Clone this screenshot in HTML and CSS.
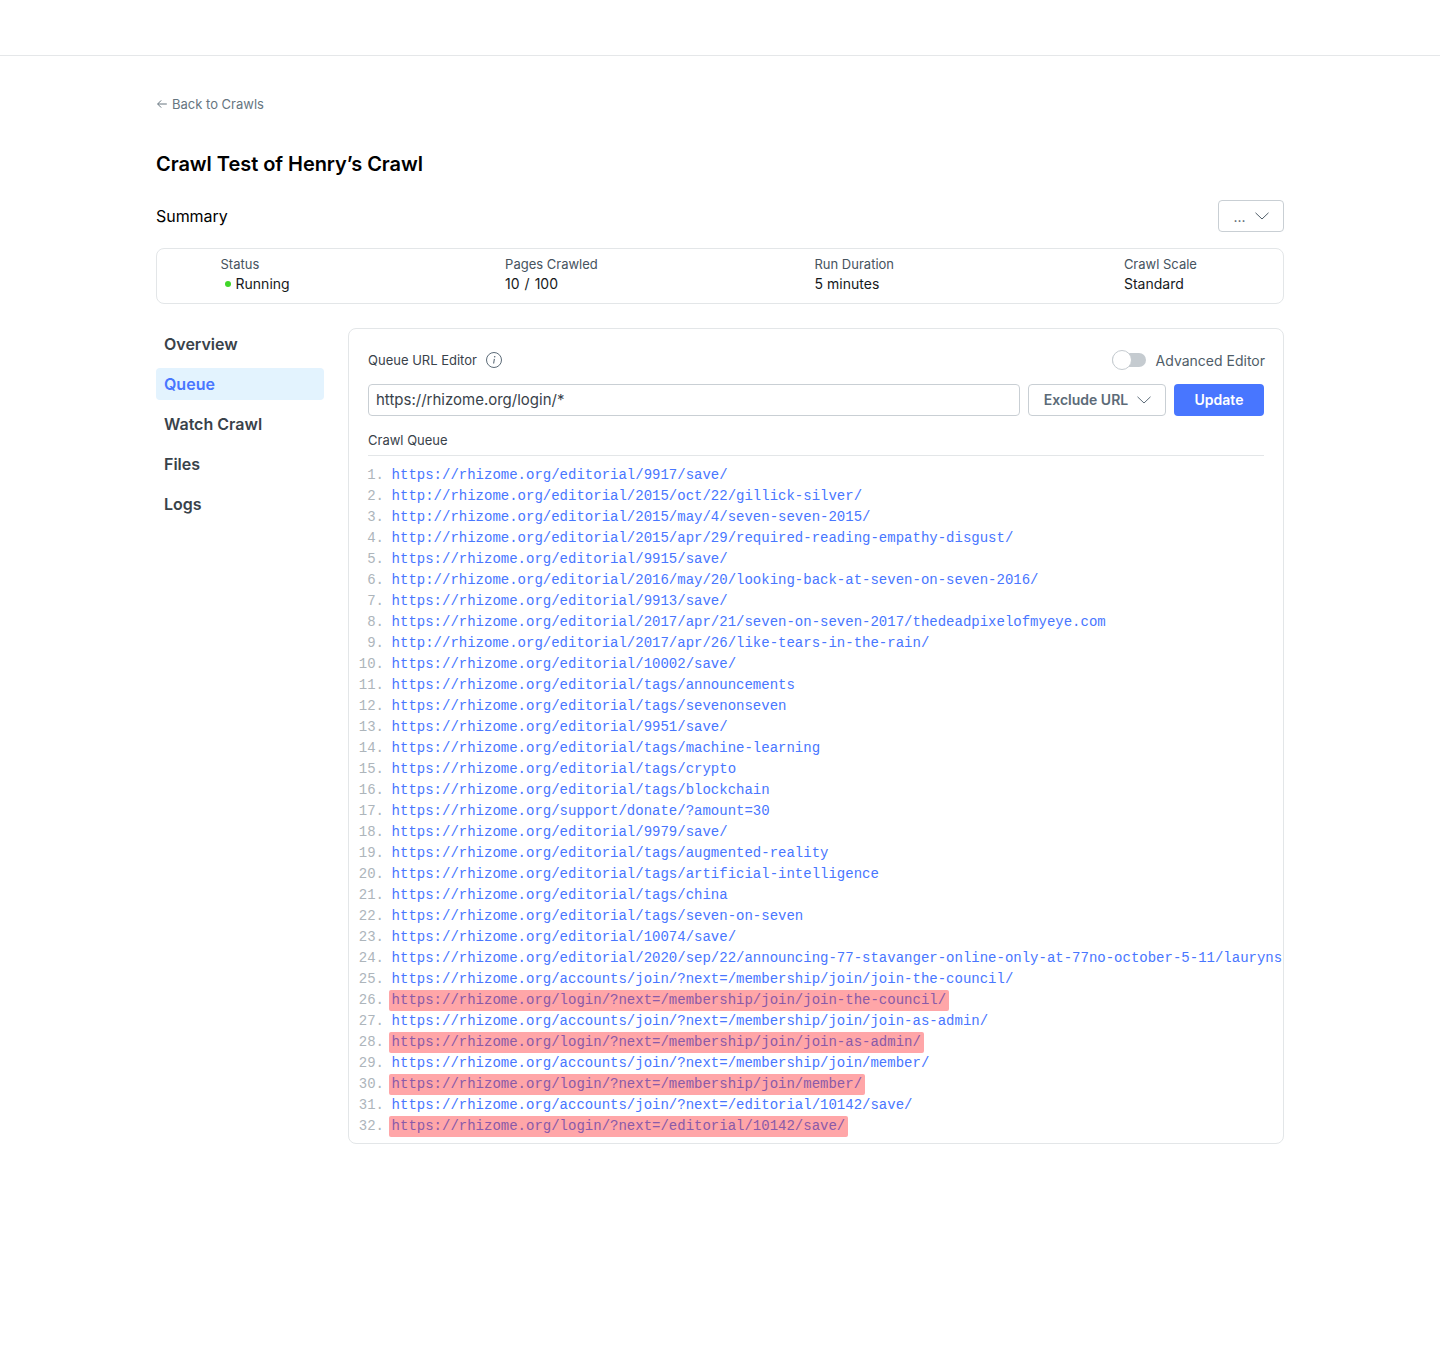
FILE: index.html
```html
<!DOCTYPE html>
<html lang="en">
<head>
<meta charset="utf-8">
<title>Crawl Test of Henry's Crawl</title>
<link rel="stylesheet" href="styles.css">
</head>
<body>
<header class="topbar"></header>
<main class="page">
  <a class="back" href="#"><svg class="back-icon" width="12" height="12" viewBox="0 0 12 12" fill="none"><path d="M10.8 6H1.8M5.2 2.4 1.6 6l3.6 3.6" stroke="currentColor" stroke-width="1"/></svg>Back to Crawls</a>
  <h1 class="title">Crawl Test of Henry’s Crawl</h1>
  <div class="summary-head">
    <h2 class="summary-title">Summary</h2>
    <button class="btn-more"><span>...</span><svg class="chev" width="14" height="8" viewBox="0 0 14 8" fill="none"><path d="M.5.8 7 7l6.5-6.2" stroke="currentColor" stroke-width="1"/></svg></button>
  </div>
  <dl class="summary">
    <div class="stat stat-status"><dt>Status</dt><dd><i class="dot"></i>Running</dd></div>
    <div class="stat stat-pages"><dt>Pages Crawled</dt><dd>10 / 100</dd></div>
    <div class="stat stat-duration"><dt>Run Duration</dt><dd>5 minutes</dd></div>
    <div class="stat stat-scale"><dt>Crawl Scale</dt><dd>Standard</dd></div>
  </dl>
  <div class="content">
    <nav class="nav">
      <a href="#">Overview</a>
      <a href="#" class="active">Queue</a>
      <a href="#">Watch Crawl</a>
      <a href="#">Files</a>
      <a href="#">Logs</a>
    </nav>
    <section class="panel">
      <div class="editor-head">
        <div class="editor-label">Queue URL Editor
          <svg class="info" width="16" height="16" viewBox="0 0 16 16" fill="none"><circle cx="8" cy="8" r="7.5" stroke="#5c6b78"/><path d="M8.4 6.8 7.6 11.5" stroke="#5c6b78" stroke-width="1.1"/><circle cx="8.7" cy="4.7" r=".8" fill="#5c6b78"/></svg>
        </div>
        <label class="toggle-wrap"><span class="toggle"><span class="knob"></span></span>Advanced Editor</label>
      </div>
      <div class="editor-row">
        <input class="url-input" type="text" value="https://rhizome.org/login/*">
        <button class="btn-select">Exclude URL<svg class="chev" width="14" height="8" viewBox="0 0 14 8" fill="none"><path d="M.5.8 7 7l6.5-6.2" stroke="currentColor" stroke-width="1"/></svg></button>
        <button class="btn-primary">Update</button>
      </div>
      <h3 class="queue-title">Crawl Queue</h3>
      <ol class="queue">
        <li><a href="#">https://rhizome.org/editorial/9917/save/</a></li>
        <li><a href="#">http://rhizome.org/editorial/2015/oct/22/gillick-silver/</a></li>
        <li><a href="#">http://rhizome.org/editorial/2015/may/4/seven-seven-2015/</a></li>
        <li><a href="#">http://rhizome.org/editorial/2015/apr/29/required-reading-empathy-disgust/</a></li>
        <li><a href="#">https://rhizome.org/editorial/9915/save/</a></li>
        <li><a href="#">http://rhizome.org/editorial/2016/may/20/looking-back-at-seven-on-seven-2016/</a></li>
        <li><a href="#">https://rhizome.org/editorial/9913/save/</a></li>
        <li><a href="#">https://rhizome.org/editorial/2017/apr/21/seven-on-seven-2017/thedeadpixelofmyeye.com</a></li>
        <li><a href="#">http://rhizome.org/editorial/2017/apr/26/like-tears-in-the-rain/</a></li>
        <li><a href="#">https://rhizome.org/editorial/10002/save/</a></li>
        <li><a href="#">https://rhizome.org/editorial/tags/announcements</a></li>
        <li><a href="#">https://rhizome.org/editorial/tags/sevenonseven</a></li>
        <li><a href="#">https://rhizome.org/editorial/9951/save/</a></li>
        <li><a href="#">https://rhizome.org/editorial/tags/machine-learning</a></li>
        <li><a href="#">https://rhizome.org/editorial/tags/crypto</a></li>
        <li><a href="#">https://rhizome.org/editorial/tags/blockchain</a></li>
        <li><a href="#">https://rhizome.org/support/donate/?amount=30</a></li>
        <li><a href="#">https://rhizome.org/editorial/9979/save/</a></li>
        <li><a href="#">https://rhizome.org/editorial/tags/augmented-reality</a></li>
        <li><a href="#">https://rhizome.org/editorial/tags/artificial-intelligence</a></li>
        <li><a href="#">https://rhizome.org/editorial/tags/china</a></li>
        <li><a href="#">https://rhizome.org/editorial/tags/seven-on-seven</a></li>
        <li><a href="#">https://rhizome.org/editorial/10074/save/</a></li>
        <li><a href="#">https://rhizome.org/editorial/2020/sep/22/announcing-77-stavanger-online-only-at-77no-october-5-11/lauryns</a></li>
        <li><a href="#">https://rhizome.org/accounts/join/?next=/membership/join/join-the-council/</a></li>
        <li><a href="#" class="hit">https://rhizome.org/login/?next=/membership/join/join-the-council/</a></li>
        <li><a href="#">https://rhizome.org/accounts/join/?next=/membership/join/join-as-admin/</a></li>
        <li><a href="#" class="hit">https://rhizome.org/login/?next=/membership/join/join-as-admin/</a></li>
        <li><a href="#">https://rhizome.org/accounts/join/?next=/membership/join/member/</a></li>
        <li><a href="#" class="hit">https://rhizome.org/login/?next=/membership/join/member/</a></li>
        <li><a href="#">https://rhizome.org/accounts/join/?next=/editorial/10142/save/</a></li>
        <li><a href="#" class="hit">https://rhizome.org/login/?next=/editorial/10142/save/</a></li>
      </ol>
    </section>
  </div>
</main>
</body>
</html>
```

FILE: styles.css
```css
* { box-sizing: border-box; }
html, body { margin: 0; padding: 0; }
body {
  min-height: 1361px;
  background: #fff;
  color: #000;
  font-family: Inter, "Liberation Sans", sans-serif;
  font-size: 14px;
}
a { text-decoration: none; color: inherit; }
.topbar { height: 56px; border-bottom: 1px solid #e5e7e9; }
.page { width: 1128px; margin: 0 auto; padding-top: 39px; }
.back { display: flex; align-items: center; height: 18px; font-size: 13px; color: #66757f; }
.back-icon { margin-right: 4px; }
.title { margin: 37px 0 0; height: 28px; line-height: 28px; font-size: 20px; font-weight: 600; letter-spacing: -.04px; }
.summary-head { display: flex; justify-content: space-between; align-items: center; margin-top: 22px; height: 32px; }
.summary-title { margin: 0; font-size: 16px; font-weight: 400; letter-spacing: -.05px; }
.btn-more {
  display: flex; align-items: center; justify-content: center; gap: 9px;
  width: 66px; height: 32px; padding: 0;
  border: 1px solid #c9cfd4; border-radius: 4px; background: #fff;
  color: #4f5d68; font: 400 14px Inter, sans-serif;
}
.summary {
  display: grid; grid-template-columns: 284.6px 309.4px 309.4px 1fr;
  margin: 16px 0 0; padding: 7px 0 0 63.5px; height: 56px;
  border: 1px solid #e3e6e8; border-radius: 8px;
}
.stat dt { font-size: 13px; line-height: 17px; color: #46535e; }
.stat dd { margin: 1px 0 0; font-size: 14px; line-height: 20px; color: #16191c; letter-spacing: .02px; }
.stat-pages dd { word-spacing: 1px; }
.dot { display: inline-block; width: 6px; height: 6px; margin: 0 5px 2px 4px; border-radius: 50%; background: #40d629; vertical-align: middle; }
.content { display: grid; grid-template-columns: 168px 1fr; column-gap: 24px; margin-top: 24px; }
.nav { display: flex; flex-direction: column; gap: 8px; }
.nav a {
  display: block; height: 32px; line-height: 32px; padding-left: 8px;
  border-radius: 4px; font-size: 16px; font-weight: 600; color: #39424a;
}
.nav a.active { background: #e3f3fe; color: #4876ff; }
.panel {
  height: 816px; padding: 20px 19px 0; overflow: hidden;
  border: 1px solid #e3e6e8; border-radius: 8px;
}
.editor-head { display: flex; justify-content: space-between; align-items: center; height: 22px; }
.editor-label { display: flex; align-items: center; gap: 9px; font-size: 13px; color: #39424a; }
.toggle-wrap { display: flex; align-items: center; gap: 10px; margin-right: -1px; font-size: 14px; color: #4f5d68; }
.toggle { position: relative; display: block; width: 34px; height: 14px; border-radius: 7px; background: #c5cbd0; }
.knob { position: absolute; left: 0; top: -3px; width: 20px; height: 20px; border: 1px solid #c5cbd0; border-radius: 50%; background: #fff; }
.editor-row { display: flex; gap: 8px; margin-top: 13px; height: 32px; }
.url-input {
  flex: 1; min-width: 0; height: 32px; padding: 0 7px 2px;
  border: 1px solid #c9cfd4; border-radius: 4px;
  color: #39424a; font: 400 15px/28px Inter, sans-serif; outline: none; background: #fff;
}
.btn-select {
  display: flex; align-items: center; justify-content: center; gap: 9px;
  width: 138px; height: 32px; padding: 0 0 1px 1px;
  border: 1px solid #c9cfd4; border-radius: 4px; background: #fff;
  color: #5c6b78; font: 600 14px Inter, sans-serif;
}
.btn-primary {
  width: 90px; height: 32px; padding: 0 0 1px; border: 0; border-radius: 4px;
  background: #4876ff; color: #fff; font: 600 14px Inter, sans-serif;
}
.queue-title {
  width: 896px; margin: 16px 0 0; padding-bottom: 7px; height: 24px;
  border-bottom: 1px solid #e3e6e8;
  font-size: 13px; line-height: 17px; font-weight: 400; color: #39424a;
}
.queue {
  list-style: none; margin: 9px 0 0 -19px; padding: 0; counter-reset: q;
  width: 934px;
  font-family: "Liberation Mono", "DejaVu Sans Mono", monospace; font-size: 14px; line-height: 21px;
}
.queue li { display: flex; height: 21px; counter-increment: q; white-space: nowrap; }
.queue li::before {
  content: counter(q) ".";
  flex: 0 0 35px; text-align: right; color: #adb5bb;
}
.queue li a { margin-left: 7.6px; color: #4876ff; }
.queue li a.hit {
  margin-left: 4.6px; padding: 0 3px; border-radius: 2px;
  background: #ffa6a8; color: #8a5aa8;
}
```
